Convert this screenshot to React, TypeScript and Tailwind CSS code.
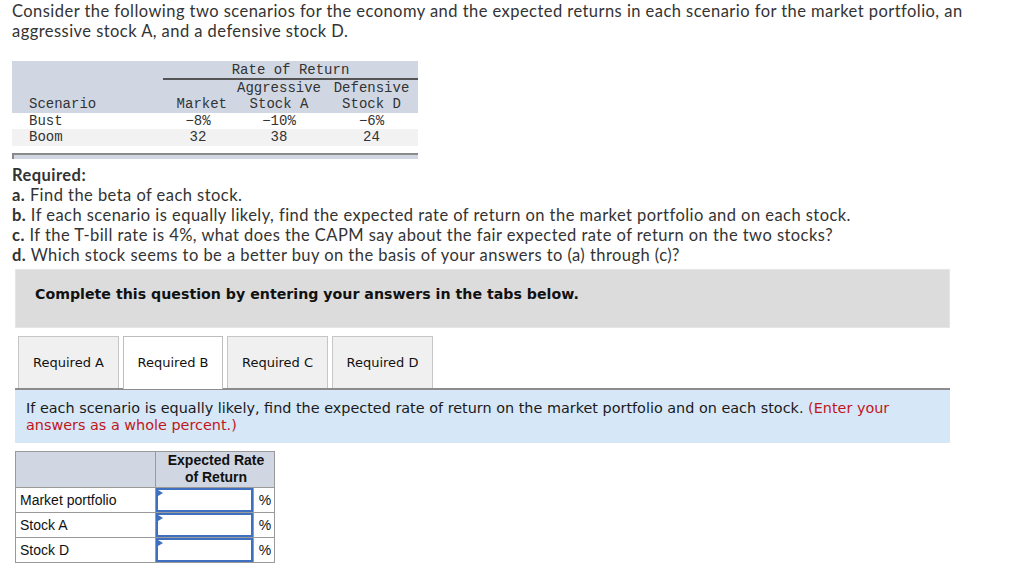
import React from "react";

const mono = { fontFamily: '"Liberation Mono", "Courier New", monospace' };

function InputCell() {
  return (
    <div className="relative h-full w-full border-2 border-[#3f6fbf] bg-white">
      <div className="absolute left-0 top-0 h-0 w-0 border-y-[3px] border-l-[5px] border-y-transparent border-l-[#3f6fbf]" />
    </div>
  );
}

export default function App() {
  const rows = ["Market portfolio", "Stock A", "Stock D"];
  return (
    <div className="min-h-[569px] w-[1024px] bg-white text-[#333]" style={{ fontFamily: 'Lato, "Open Sans", sans-serif' }}>
      <div className="px-[12px] pt-[1px] text-[16.5px] leading-[20px] tracking-[0.45px]">
        Consider the following two scenarios for the economy and the expected returns in each scenario for the market portfolio, an
        <br />
        aggressive stock A, and a defensive stock D.
      </div>

      {/* Data table */}
      <div className="ml-[12px] mt-[20px] w-[406px] text-[14px] leading-[16px] text-[#333]" style={mono}>
        <div className="bg-[#d0d7e3] pt-[1px] pb-[1px]">
          <div className="grid grid-cols-[151px_255px]">
            <div />
            <div className="text-center">Rate of Return</div>
          </div>
          <div className="grid grid-cols-[151px_255px]">
            <div />
            <div className="h-[2px] bg-[#555]" />
          </div>
          <div className="grid grid-cols-[151px_70px_92px_93px]">
            <div />
            <div />
            <div className="text-center">Aggressive</div>
            <div className="text-center">Defensive</div>
          </div>
          <div className="grid grid-cols-[151px_70px_92px_93px]">
            <div className="pl-[17px]">Scenario</div>
            <div className="pr-[6px] text-right">Market</div>
            <div className="text-center">Stock A</div>
            <div className="text-center">Stock D</div>
          </div>
        </div>
        <div className="grid grid-cols-[151px_70px_92px_93px] bg-white">
          <div className="pl-[17px]">Bust</div>
          <div className="text-center">−8%</div>
          <div className="text-center">−10%</div>
          <div className="text-center">−6%</div>
        </div>
        <div className="grid h-[17px] grid-cols-[151px_70px_92px_93px] bg-[#f2f2f2]">
          <div className="pl-[17px]">Boom</div>
          <div className="text-center">32</div>
          <div className="text-center">38</div>
          <div className="text-center">24</div>
        </div>
        <div className="mt-[7px] h-[6px] border-l-2 border-t-2 border-[#8a8a8a] bg-[#d0d7e3]" />
      </div>

      {/* Required */}
      <div className="mt-[6px] px-[12px] text-[16.5px] leading-[20px] tracking-[0.45px]">
        <div className="font-bold">Required:</div>
        <div><b>a.</b> Find the beta of each stock.</div>
        <div><b>b.</b> If each scenario is equally likely, find the expected rate of return on the market portfolio and on each stock.</div>
        <div><b>c.</b> If the T-bill rate is 4%, what does the CAPM say about the fair expected rate of return on the two stocks?</div>
        <div><b>d.</b> Which stock seems to be a better buy on the basis of your answers to (a) through (c)?</div>
      </div>

      {/* Instruction box */}
      <div
        className="ml-[15px] mt-[4px] h-[59px] w-[935px] border border-[#e6e6e6] bg-[#dcdcdc] pl-[19px] pt-[15px] text-[14.2px] font-bold leading-[18px] text-[#111]"
        style={{ fontFamily: 'Verdana, "DejaVu Sans", sans-serif' }}
      >
        Complete this question by entering your answers in the tabs below.
      </div>

      {/* Tabs */}
      <div className="ml-[15px] mt-[8px] w-[935px]" style={{ fontFamily: 'Verdana, "DejaVu Sans", sans-serif' }}>
        <div className="flex items-end gap-[4px] pl-[3px] text-[13px] text-[#111]">
          {["Required A", "Required B", "Required C", "Required D"].map((t) => (
            <div
              key={t}
              className={
                t === "Required B"
                  ? "relative z-10 -mb-[1px] flex h-[53px] w-[100px] items-center justify-center border border-b-0 border-[#bdbdbd] bg-white"
                  : "flex h-[52px] w-[101px] items-center justify-center border border-b-0 border-[#c6c6c6] bg-[#f0f0f0]"
              }
            >
              {t}
            </div>
          ))}
        </div>
        <div className="border-t-2 border-[#8c8c8c] bg-[#d6e7f7] px-[11px] pb-[9px] pt-[10px] text-[14.4px] leading-[17px] text-[#1a1a1a]">
          If each scenario is equally likely, find the expected rate of return on the market portfolio and on each stock.{" "}
          <span className="text-[#c0161b]">(Enter your</span>
          <br />
          <span className="text-[#c0161b]">answers as a whole percent.)</span>
        </div>
      </div>

      {/* Answer table */}
      <div className="ml-[15px] mt-[8px] w-[260px] text-[14px] text-[#111]" style={{ fontFamily: '"Liberation Sans", Arial, sans-serif' }}>
        <div className="grid grid-cols-[140px_120px] border border-[#9a9a9a] bg-[#d0d7e3]">
          <div className="h-[35px] border-r border-[#9a9a9a]" />
          <div className="text-center text-[14px] font-bold leading-[17px]">
            Expected Rate
            <br />
            of Return
          </div>
        </div>
        {rows.map((r) => (
          <div key={r} className="grid h-[25px] grid-cols-[140px_97px_23px] border-x border-b border-[#9a9a9a]">
            <div className="flex items-center border-r border-[#9a9a9a] pl-[4px]">{r}</div>
            <div className="p-0">
              <InputCell />
            </div>
            <div className="flex items-center justify-center border-l border-[#9a9a9a]">%</div>
          </div>
        ))}
      </div>
    </div>
  );
}
